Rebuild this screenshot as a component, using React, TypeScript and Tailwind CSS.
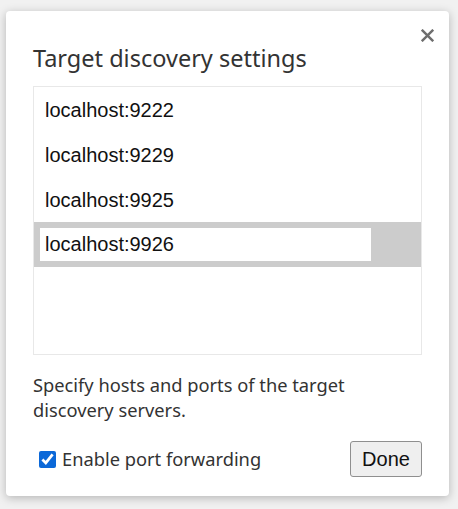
import React, { useState } from 'react';

const hosts = ['localhost:9222', 'localhost:9229', 'localhost:9925'];

export default function App() {
  const [value, setValue] = useState('localhost:9926');
  const [forwarding, setForwarding] = useState(true);

  return (
    <div className="w-[458px] h-[509px] bg-[#f1f1f1] pt-[11px] pl-[6px]">
      {/* Dialog card */}
      <div
        className="relative w-[443px] h-[485px] bg-white rounded-[4px] shadow-[0_2px_10px_rgba(0,0,0,0.25)] px-[27px] pt-[32px] flex flex-col"
        style={{ fontFamily: '"Noto Sans", "Open Sans", sans-serif' }}
      >
        <button className="absolute right-[14px] top-[16px] w-[16px] h-[16px] flex items-center justify-center text-[#6e6e6e]">
          <svg viewBox="0 0 16 16" className="w-[13px] h-[13px]">
            <path d="M2 2 L14 14 M14 2 L2 14" stroke="currentColor" strokeWidth="3" strokeLinecap="square" />
          </svg>
        </button>

        <h1 className="text-[23.5px] leading-[30px] text-[#333]">Target discovery settings</h1>

        {/* Host list */}
        <div
          className="mt-[13px] h-[269px] border border-[#e8e8e8] flex flex-col"
          style={{ fontFamily: '"Liberation Sans", Arial, sans-serif' }}
        >
          {hosts.map((h) => (
            <div key={h} className="h-[45px] flex items-center pl-[11px] text-[20px] text-[#111]">
              {h}
            </div>
          ))}
          <div className="h-[45px] bg-[#cccccc] flex items-center pl-[6px]">
            <input
              value={value}
              onChange={(e) => setValue(e.target.value)}
              className="w-[331px] h-[33px] bg-white pl-[5px] text-[20px] text-[#111] outline-none"
            />
          </div>
        </div>

        <p className="mt-[17px] text-[18.3px] leading-[25px] text-[#333] max-w-[370px]">
          Specify hosts and ports of the target discovery servers.
        </p>

        <div className="mt-[19px] flex items-center justify-between">
          <label className="flex items-center gap-[6px] pl-[6px] text-[18.3px] text-[#333]">
            <input
              type="checkbox"
              checked={forwarding}
              onChange={(e) => setForwarding(e.target.checked)}
              className="w-[17px] h-[17px] accent-[#0b68d8]"
            />
            Enable port forwarding
          </label>
          <button
            className="w-[72px] h-[36px] border border-[#8f8f8f] rounded-[3px] bg-[#efefef] text-[20px] text-[#111]"
            style={{ fontFamily: '"Liberation Sans", Arial, sans-serif' }}
          >
            Done
          </button>
        </div>
      </div>
    </div>
  );
}
